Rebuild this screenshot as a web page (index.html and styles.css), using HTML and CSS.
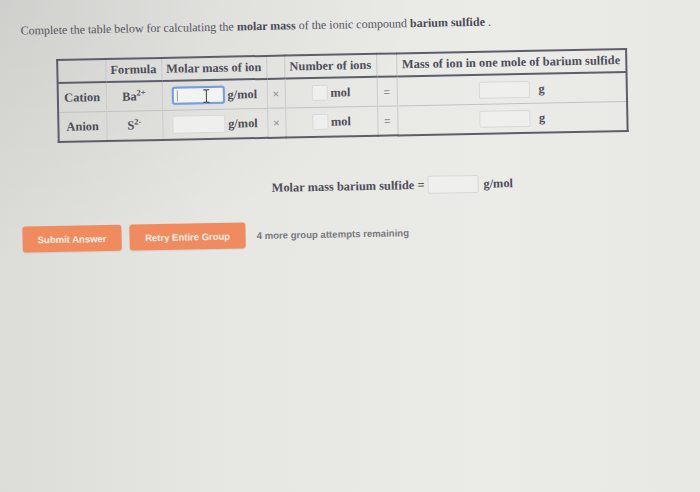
FILE: index.html
```html
<!DOCTYPE html>
<html lang="en">
<head>
<meta charset="utf-8">
<title>Molar mass of barium sulfide</title>
<link rel="stylesheet" href="styles.css">
</head>
<body>
<div class="page">
  <p class="intro">Complete the table below for calculating the <b>molar mass</b> of the ionic compound <b>barium sulfide</b> .</p>

  <table class="calc">
    <colgroup>
      <col class="c-label">
      <col class="c-formula">
      <col class="c-molar">
      <col class="c-op">
      <col class="c-count">
      <col class="c-eq">
      <col class="c-mass">
    </colgroup>
    <thead>
      <tr>
        <th></th>
        <th>Formula</th>
        <th>Molar mass of ion</th>
        <th></th>
        <th>Number of ions</th>
        <th></th>
        <th>Mass of ion in one mole of barium sulfide</th>
      </tr>
    </thead>
    <tbody>
      <tr>
        <td>Cation</td>
        <td>Ba<sup>2+</sup></td>
        <td>
          <span class="field">
            <span class="box molar focused"><span class="caret"></span>
              <svg class="ibeam" viewBox="0 0 7 14" width="7" height="14" aria-hidden="true"><path d="M0.5 0.8h2.2l0.8 0.8l0.8-0.8h2.2M3.5 1.6v10.8M0.5 13.2h2.2l0.8-0.8l0.8 0.8h2.2" fill="none" stroke="#3a3a3a" stroke-width="1"/></svg>
            </span>
            <span class="unit">g/mol</span>
          </span>
        </td>
        <td class="op">×</td>
        <td><span class="field"><span class="box count"></span><span class="unit">mol</span></span></td>
        <td class="op">=</td>
        <td><span class="field wide-gap"><span class="box mass"></span><span class="unit">g</span></span></td>
      </tr>
      <tr>
        <td>Anion</td>
        <td>S<sup>2-</sup></td>
        <td><span class="field"><span class="box molar"></span><span class="unit">g/mol</span></span></td>
        <td class="op">×</td>
        <td><span class="field"><span class="box count"></span><span class="unit">mol</span></span></td>
        <td class="op">=</td>
        <td><span class="field wide-gap"><span class="box mass"></span><span class="unit">g</span></span></td>
      </tr>
    </tbody>
  </table>

  <div class="total">
    <span class="total-label">Molar mass barium sulfide =</span>
    <span class="box total-box"></span>
    <span class="unit">g/mol</span>
  </div>

  <div class="actions">
    <button class="btn btn-submit" type="button">Submit Answer</button>
    <button class="btn btn-retry" type="button">Retry Entire Group</button>
    <span class="attempts">4 more group attempts remaining</span>
  </div>
</div>
</body>
</html>
```

FILE: styles.css
```css
html, body {
  margin: 0;
  padding: 0;
}

body {
  width: 700px;
  height: 492px;
  overflow: hidden;
  background:
    radial-gradient(ellipse 420px 260px at 0 0, rgba(0, 0, 0, 0.06), rgba(0, 0, 0, 0) 100%),
    linear-gradient(to right, #dcdcd9 0%, #e6e6e3 30%, #ebebe8 70%, #e8e8e5 100%);
  font-family: "Liberation Serif", "Times New Roman", serif;
  color: #50505c;
}

.page {
  padding: 23px 0 0 19px;
  transform: rotate(-1.1deg);
  transform-origin: 0 0;
}

.intro {
  margin: 0 0 0 1px;
  font-size: 12px;
  line-height: 16px;
  color: #55555f;
}

.intro b {
  color: #4a4a56;
}

/* ---------- table ---------- */
.calc {
  margin: 21px 0 0 36px;
  width: 569px;
  table-layout: fixed;
  border-collapse: collapse;
  border: 2px solid #5e5e6a;
  font-size: 12.4px;
  font-weight: bold;
  color: #4e4e5a;
}

.c-label { width: 48px; }
.c-formula { width: 56px; }
.c-molar { width: 105px; }
.c-op { width: 18px; }
.c-count { width: 92px; }
.c-eq { width: 20px; }
.c-mass { width: 230px; }

.calc th {
  height: 21px;
  padding: 0 2px;
  line-height: 15px;
  text-align: center;
  white-space: nowrap;
  border-left: 1px solid #c8c8cc;
  border-bottom: 2px solid #5e5e6a;
}

.calc td {
  height: 28px;
  padding: 0;
  text-align: center;
  white-space: nowrap;
  border-left: 1px solid #cbcbcf;
  border-top: 1px solid #c2c2c6;
}

.calc sup {
  font-size: 8.5px;
  line-height: 0;
  vertical-align: 5px;
}

.calc .op {
  font-family: "Liberation Sans", Arial, sans-serif;
  font-weight: normal;
  font-size: 11px;
  color: #8c8c94;
}

.field {
  display: inline-flex;
  align-items: center;
  gap: 3px;
  vertical-align: middle;
}

.field.wide-gap {
  gap: 9px;
}

.box {
  display: inline-block;
  box-sizing: border-box;
  height: 17px;
  border: 1px solid #d9d9db;
  border-radius: 2px;
  background: #efefed;
}

.box.molar {
  width: 53px;
  height: 18px;
}

.box.count {
  width: 16px;
  height: 16px;
}

.box.mass {
  width: 51px;
}

.box.focused {
  position: relative;
  border: 2px solid #739ee2;
  border-radius: 3px;
  background: #f3f3f1;
  box-shadow: 0 0 1px rgba(115, 158, 226, 0.6);
}

.caret {
  position: absolute;
  left: 3px;
  top: 2px;
  width: 1px;
  height: 11px;
  background: #9a9aa0;
}

.ibeam {
  position: absolute;
  left: 29px;
  top: 1px;
}

.unit {
  display: inline-block;
}

/* ---------- total line ---------- */
.total {
  display: flex;
  align-items: center;
  height: 18px;
  margin: 40px 0 0 249px;
  font-size: 12.4px;
  font-weight: bold;
  color: #4e4e5a;
}

.total-label {
  margin-right: 3px;
}

.box.total-box {
  width: 51px;
  height: 18px;
  margin-right: 5px;
}

/* ---------- actions ---------- */
.actions {
  display: flex;
  align-items: center;
  margin: 25px 0 0 -1px;
  font-family: "Liberation Sans", Arial, sans-serif;
}

.btn {
  box-sizing: border-box;
  height: 26px;
  padding: 0;
  border: none;
  border-radius: 3px;
  background: #ef8b5f;
  color: #fdeee6;
  font-family: "Liberation Sans", Arial, sans-serif;
  font-size: 9.5px;
  font-weight: bold;
  box-shadow: 0 1px 1px rgba(0, 0, 0, 0.08);
}

.btn-submit {
  width: 99px;
}

.btn-retry {
  width: 116px;
  margin-left: 8px;
}

.attempts {
  margin-left: 11px;
  font-size: 9.6px;
  font-weight: bold;
  color: #7a7a80;
}
```
